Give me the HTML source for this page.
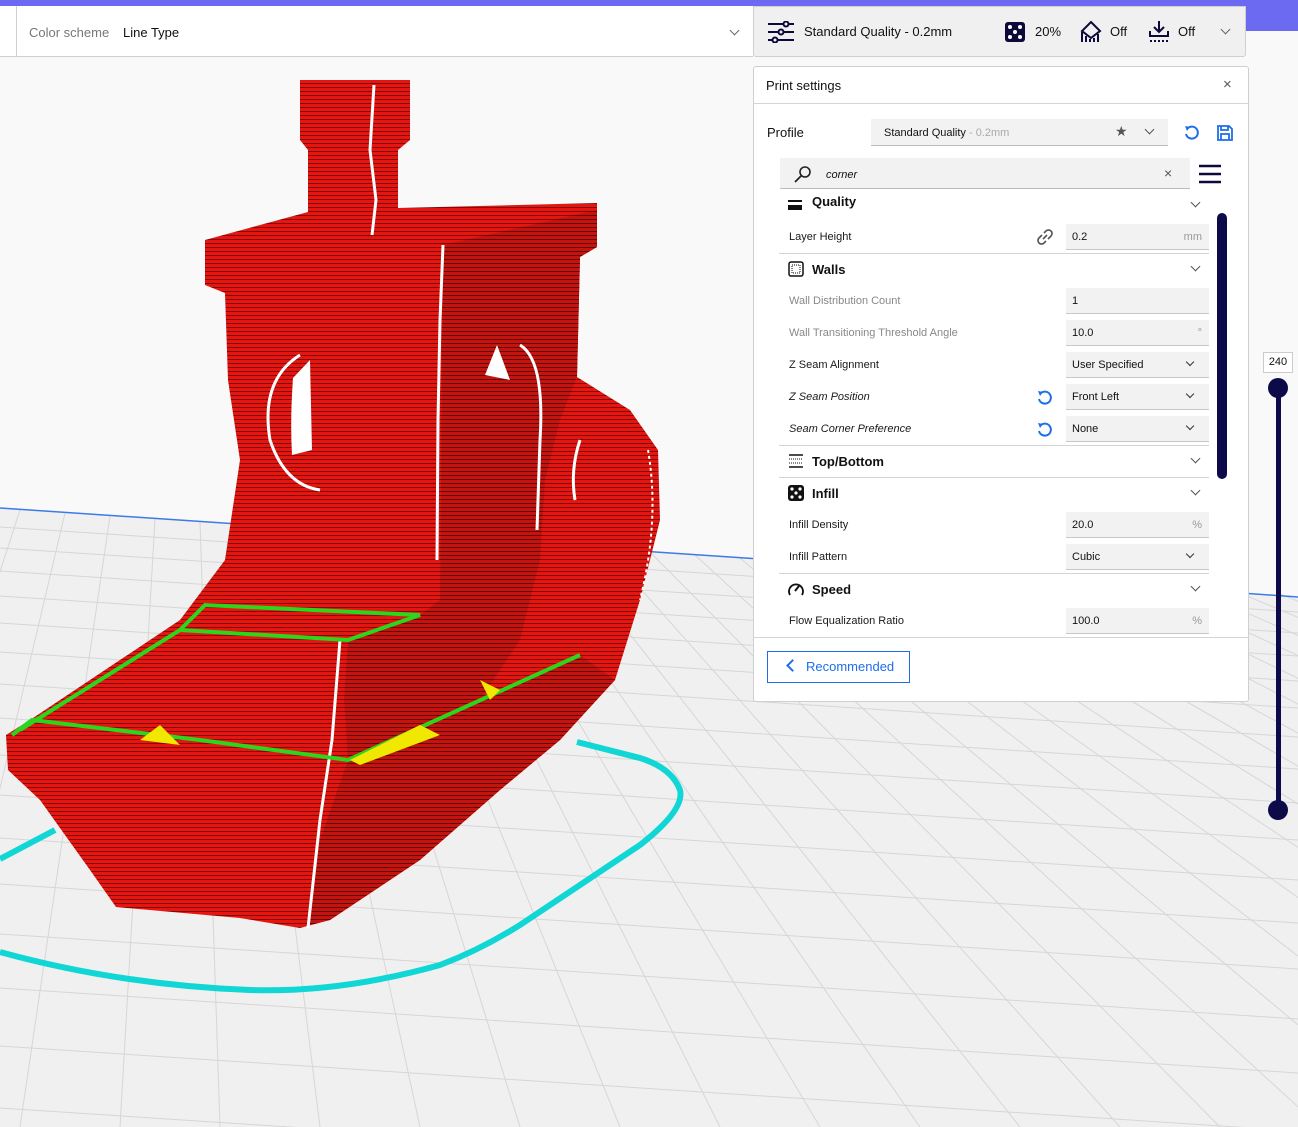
<!DOCTYPE html>
<html style="overflow:hidden"><head><meta charset="utf-8"><style>
*{margin:0;padding:0;box-sizing:border-box}
html,body{width:1298px;height:1127px;overflow:hidden}
body{background:#f9f9f9;font-family:"Liberation Sans",sans-serif;position:relative;color:#1a1a1a}
.abs{position:absolute}
.row{position:absolute;left:789px;font-size:11px;color:#1a1a1a}
.val{position:absolute;left:1066px;width:143px;height:26px;background:#f2f2f2;border-bottom:1px solid #c8c8c8;font-size:11px;padding:7px 6px;color:#111}
.unit{position:absolute;right:7px;top:7px;color:#999}
.chev{position:absolute;right:16px;top:7px;width:6px;height:6px;border-right:1px solid #333;border-bottom:1px solid #333;transform:rotate(45deg)}
.hdr{position:absolute;left:812px;font-size:13px;font-weight:bold;color:#111}
.sep{position:absolute;left:779px;width:430px;height:1px;background:#d4d4d4}
.hchev{position:absolute;left:1192px;width:7px;height:7px;border-right:1px solid #555;border-bottom:1px solid #555;transform:rotate(45deg)}
</style></head><body>
<svg class="abs" style="left:0;top:0" width="1298" height="1127" viewBox="0 0 1298 1127">
<defs>
<pattern id="stripe" width="6" height="4" patternUnits="userSpaceOnUse"><rect width="6" height="4" fill="#e8140f"/><rect y="3" width="6" height="1" fill="#7a0d0a"/></pattern>
<pattern id="stripe2" width="6" height="4" patternUnits="userSpaceOnUse"><rect width="6" height="4" fill="#c8120e"/><rect y="3" width="6" height="1" fill="#5a0a08"/></pattern>
</defs>
<polygon points="0,508 760,559 1298,597 1298,1127 0,1127" fill="#f0f0f0"/>
<g stroke="#d6d6d6" stroke-width="1">
<line x1="0" y1="527" x2="1298" y2="612"/><line x1="0" y1="548" x2="1298" y2="633"/><line x1="0" y1="571" x2="1298" y2="656"/><line x1="0" y1="596" x2="1298" y2="681"/><line x1="0" y1="623" x2="1298" y2="708"/><line x1="0" y1="652" x2="1298" y2="737"/><line x1="0" y1="684" x2="1298" y2="769"/><line x1="0" y1="718" x2="1298" y2="803"/><line x1="0" y1="755" x2="1298" y2="840"/><line x1="0" y1="795" x2="1298" y2="880"/><line x1="0" y1="838" x2="1298" y2="923"/><line x1="0" y1="884" x2="1298" y2="969"/><line x1="0" y1="934" x2="1298" y2="1019"/><line x1="0" y1="988" x2="1298" y2="1073"/><line x1="0" y1="1046" x2="1298" y2="1131"/><line x1="0" y1="1108" x2="1298" y2="1193"/>
</g>
<g stroke="#d6d6d6" stroke-width="1">
<line x1="20" y1="510" x2="-180" y2="1127"/><line x1="65" y1="513" x2="-80" y2="1127"/><line x1="110" y1="516" x2="20" y2="1127"/><line x1="155" y1="519" x2="120" y2="1127"/><line x1="200" y1="522" x2="220" y2="1127"/><line x1="245" y1="525" x2="320" y2="1127"/><line x1="290" y1="528" x2="420" y2="1127"/><line x1="335" y1="531" x2="520" y2="1127"/><line x1="380" y1="534" x2="620" y2="1127"/><line x1="425" y1="537" x2="720" y2="1127"/><line x1="470" y1="540" x2="820" y2="1127"/><line x1="515" y1="543" x2="920" y2="1127"/><line x1="560" y1="546" x2="1020" y2="1127"/><line x1="605" y1="549" x2="1120" y2="1127"/><line x1="650" y1="552" x2="1220" y2="1127"/><line x1="695" y1="555" x2="1320" y2="1127"/><line x1="740" y1="558" x2="1420" y2="1127"/><line x1="785" y1="561" x2="1520" y2="1127"/><line x1="830" y1="564" x2="1620" y2="1127"/><line x1="875" y1="567" x2="1720" y2="1127"/><line x1="920" y1="570" x2="1820" y2="1127"/><line x1="965" y1="573" x2="1920" y2="1127"/><line x1="1010" y1="576" x2="2020" y2="1127"/><line x1="1055" y1="579" x2="2120" y2="1127"/><line x1="1100" y1="582" x2="2220" y2="1127"/><line x1="1145" y1="585" x2="2320" y2="1127"/><line x1="1190" y1="588" x2="2420" y2="1127"/><line x1="1235" y1="591" x2="2520" y2="1127"/><line x1="1280" y1="594" x2="2620" y2="1127"/>
</g>
<polyline points="0,508 760,559 1298,597" fill="none" stroke="#3a7be8" stroke-width="1.5"/>
<g fill="none" stroke="#11d6d6" stroke-width="6">
<path d="M0,952 Q120,985 250,990 Q340,993 440,965 Q480,950 520,925 L640,845 Q685,810 680,790 Q672,768 640,758 L577,742"/>
<path d="M0,859 L55,830"/>
</g>
<polygon fill="url(#stripe)" points="300,80 410,80 410,140 398,150 398,208 597,203 597,247 580,257 577,377 630,410 658,450 660,520 640,600 615,680 560,740 500,790 420,860 330,920 300,928 240,918 116,907 90,870 40,800 8,770 6,735 30,720 180,620 225,560 240,460 228,380 225,293 205,285 205,240 308,212 308,150 300,140"/>
<polygon fill="url(#stripe2)" points="443,245 597,210 597,247 580,257 577,377 560,420 545,480 540,560 520,640 480,700 440,730 348,760 340,640 420,615 440,600"/>
<polygon fill="url(#stripe2)" points="348,760 580,655 615,680 560,740 500,790 420,860 330,920 310,925 320,840"/>
<polygon fill="url(#stripe)" points="180,630 205,605 420,615 348,640 340,760 180,745"/>
<g stroke="#fff" stroke-width="3" fill="none">
<path d="M374,85 L370,150 L376,200 L372,235"/>
<path d="M443,245 L440,320 L438,420 L437,560"/>
<path d="M340,640 L332,740 L320,820 L308,928"/>
<path d="M300,355 Q260,380 270,440 Q285,485 320,490"/>
<path d="M520,345 Q545,360 540,440 L537,530"/>
<path d="M580,440 Q570,470 575,500"/>
<path d="M648,450 Q660,520 640,600" stroke-width="2" stroke-dasharray="3 3"/>
</g>
<g fill="#fff"><path d="M293,378 Q290,420 292,455 L312,450 L310,360 Z"/><path d="M485,375 L497,345 L510,380 Z"/></g>
<g fill="none" stroke="#2bd61c" stroke-width="4">
<path d="M180,630 L205,605 L420,615 L348,640 Z"/>
<path d="M12,735 L32,720 L200,740 L348,760 L580,655"/>
<path d="M20,730 L180,630"/>
</g>
<g fill="#f0e800"><path d="M480,680 L500,690 L490,700 Z"/><path d="M350,760 L420,725 L440,735 L360,765 Z"/><path d="M140,740 L160,725 L180,745 Z"/></g>
</svg>

<div class="abs" style="left:0;top:0;width:1298px;height:6px;background:#6c6af0"></div>
<div class="abs" style="left:1245px;top:0;width:53px;height:31px;background:#6c6af0"></div>
<div class="abs" style="left:0;top:6px;width:753px;height:51px;background:#fff;border-bottom:1px solid #cfcfcf"></div>
<div class="abs" style="left:16px;top:6px;width:1px;height:51px;background:#cfcfcf"></div>
<div class="abs" style="left:29px;top:25px;font-size:13px;color:#777">Color scheme</div>
<div class="abs" style="left:123px;top:25px;font-size:13px;color:#111">Line Type</div>
<div class="abs" style="left:731px;top:27px;width:7px;height:7px;border-right:1px solid #666;border-bottom:1px solid #666;transform:rotate(45deg)"></div>
<div class="abs" style="left:753px;top:6px;width:493px;height:51px;background:#f0f0f0;border:1px solid #cfcfcf;border-radius:0 0 3px 3px"></div>
<svg class="abs" style="left:768px;top:21px" width="28" height="22"><g stroke="#0d0a3a" stroke-width="2" fill="#f0f0f0"><line x1="0" y1="3" x2="26" y2="3"/><line x1="0" y1="11" x2="26" y2="11"/><line x1="0" y1="19" x2="26" y2="19"/><circle cx="18" cy="3" r="2.5"/><circle cx="13" cy="11" r="2.5"/><circle cx="7" cy="19" r="2.5"/></g></svg>
<div class="abs" style="left:804px;top:24px;font-size:13px;color:#111">Standard Quality - 0.2mm</div>
<svg class="abs" style="left:1005px;top:22px" width="20" height="20"><rect width="20" height="20" rx="3" fill="#0d0a3a"/><g fill="#fff"><circle cx="5" cy="5" r="2"/><circle cx="15" cy="5" r="2"/><circle cx="10" cy="10" r="2"/><circle cx="5" cy="15" r="2"/><circle cx="15" cy="15" r="2"/></g></svg>
<div class="abs" style="left:1035px;top:24px;font-size:13px;color:#111">20%</div>
<svg class="abs" style="left:1080px;top:20px" width="22" height="23"><g fill="none" stroke="#0d0a3a" stroke-width="2"><path d="M11,2 L20,11 L11,18 L2,11 Z"/><path d="M2,12 V22 M6,16 V22 M10,19 V22 M14,18 V22 M18,14 V22"/></g></svg>
<div class="abs" style="left:1110px;top:24px;font-size:13px;color:#111">Off</div>
<svg class="abs" style="left:1148px;top:20px" width="22" height="23"><g fill="none" stroke="#0d0a3a" stroke-width="2"><path d="M11,1 V12 M6,7 L11,12 L16,7 M2,11 V16 H20 V11"/><path d="M2,21 H20" stroke-dasharray="2 2"/></g></svg>
<div class="abs" style="left:1178px;top:24px;font-size:13px;color:#111">Off</div>
<div class="abs" style="left:1222px;top:26px;width:7px;height:7px;border-right:1px solid #666;border-bottom:1px solid #666;transform:rotate(45deg)"></div>

<div class="abs" style="left:753px;top:66px;width:496px;height:636px;background:#fff;border:1px solid #cfcfcf;border-radius:3px"></div>
<div class="abs" style="left:754px;top:103px;width:494px;height:1px;background:#d4d4d4"></div>
<div class="abs" style="left:766px;top:78px;font-size:13px;color:#111">Print settings</div>
<div class="abs" style="left:1223px;top:76px;font-size:15px;color:#555">×</div>
<div class="abs" style="left:767px;top:125px;font-size:13px;color:#111">Profile</div>
<div class="abs" style="left:871px;top:119px;width:297px;height:27px;background:#f2f2f2;border-bottom:1px solid #bbb"></div>
<div class="abs" style="left:884px;top:127px;font-size:11px;color:#111">Standard Quality <span style="color:#aaa">- 0.2mm</span></div>
<div class="abs" style="left:1115px;top:123px;font-size:14px;color:#555">★</div>
<div class="abs" style="left:1146px;top:126px;width:7px;height:7px;border-right:1px solid #555;border-bottom:1px solid #555;transform:rotate(45deg)"></div>
<svg class="abs" style="left:1183px;top:124px" width="18" height="18"><path d="M5,4 A6,6 0 1 1 3,10" fill="none" stroke="#1e6ee8" stroke-width="2"/><path d="M2,2 L7,3 L4,7 Z" fill="#1e6ee8"/></svg>
<svg class="abs" style="left:1216px;top:124px" width="18" height="18"><path d="M2,2 H13 L16,5 V16 H2 Z M5,2 V6 H12 V2 M5,16 V10 H13 V16" fill="none" stroke="#1e6ee8" stroke-width="1.8"/></svg>
<div class="abs" style="left:780px;top:158px;width:410px;height:31px;background:#f2f2f2;border-bottom:1px solid #bbb"></div>
<svg class="abs" style="left:794px;top:165px" width="18" height="18"><circle cx="11" cy="7" r="5" fill="none" stroke="#222" stroke-width="1.6"/><line x1="7" y1="11" x2="1" y2="17" stroke="#222" stroke-width="1.8"/></svg>
<div class="abs" style="left:826px;top:169px;font-size:11px;font-style:italic;color:#111">corner</div>
<div class="abs" style="left:1164px;top:165px;font-size:14px;color:#555">×</div>
<svg class="abs" style="left:1199px;top:164px" width="22" height="20"><g stroke="#0d0a3a" stroke-width="2.4"><line x1="0" y1="2" x2="22" y2="2"/><line x1="0" y1="10" x2="22" y2="10"/><line x1="0" y1="18" x2="22" y2="18"/></g></svg>

<div class="abs" style="left:754px;top:192px;width:460px;height:444px;overflow:hidden">
<div style="position:absolute;left:34px;top:8px;width:14px;height:2px;background:#111"></div>
<div style="position:absolute;left:34px;top:13px;width:14px;height:5px;background:#111"></div>
<div style="position:absolute;left:58px;top:2px;font-size:13px;font-weight:bold;color:#111">Quality</div>
</div>
<div class="hchev" style="top:199px"></div>
<div class="row" style="top:231px">Layer Height</div>
<svg class="abs" style="left:1036px;top:228px" width="18" height="18"><g fill="none" stroke="#555" stroke-width="1.6"><path d="M8,5 L10,3 A3,3 0 0 1 15,8 L12,11"/><path d="M10,13 L8,15 A3,3 0 0 1 3,10 L6,7"/><line x1="7" y1="11" x2="11" y2="7"/></g></svg>
<div class="val" style="top:224px">0.2<span class="unit">mm</span></div>
<div class="sep" style="top:253px"></div>
<svg class="abs" style="left:788px;top:261px" width="16" height="16"><rect x="1" y="1" width="14" height="14" rx="2" fill="none" stroke="#111" stroke-width="1.5"/><rect x="4" y="4" width="8" height="8" fill="none" stroke="#111" stroke-width="1" stroke-dasharray="1 1"/></svg>
<div class="hdr" style="top:262px">Walls</div><div class="hchev" style="top:263px"></div>
<div class="row" style="top:295px;color:#888">Wall Distribution Count</div><div class="val" style="top:288px">1</div>
<div class="row" style="top:327px;color:#888">Wall Transitioning Threshold Angle</div><div class="val" style="top:320px">10.0<span class="unit">°</span></div>
<div class="row" style="top:359px">Z Seam Alignment</div><div class="val" style="top:352px">User Specified<span class="chev"></span></div>
<div class="row" style="top:391px;font-style:italic">Z Seam Position</div><div class="val" style="top:384px">Front Left<span class="chev"></span></div>
<div class="row" style="top:423px;font-style:italic">Seam Corner Preference</div><div class="val" style="top:416px">None<span class="chev"></span></div>
<svg class="abs" style="left:1036px;top:389px" width="18" height="18"><path d="M5,4 A6,6 0 1 1 3,10" fill="none" stroke="#1e6ee8" stroke-width="2"/><path d="M2,2 L7,3 L4,7 Z" fill="#1e6ee8"/></svg>
<svg class="abs" style="left:1036px;top:421px" width="18" height="18"><path d="M5,4 A6,6 0 1 1 3,10" fill="none" stroke="#1e6ee8" stroke-width="2"/><path d="M2,2 L7,3 L4,7 Z" fill="#1e6ee8"/></svg>
<div class="sep" style="top:445px"></div>
<svg class="abs" style="left:788px;top:453px" width="16" height="16"><g stroke="#111"><line x1="1" y1="2" x2="15" y2="2" stroke-width="1.5"/><line x1="1" y1="14" x2="15" y2="14" stroke-width="1.5"/><line x1="1" y1="6" x2="15" y2="6" stroke-dasharray="1 1"/><line x1="1" y1="10" x2="15" y2="10" stroke-dasharray="1 1"/></g></svg>
<div class="hdr" style="top:454px">Top/Bottom</div><div class="hchev" style="top:455px"></div>
<div class="sep" style="top:477px"></div>
<svg class="abs" style="left:788px;top:485px" width="16" height="16"><rect width="16" height="16" rx="3" fill="#111"/><g fill="#fff"><circle cx="4" cy="4" r="1.6"/><circle cx="12" cy="4" r="1.6"/><circle cx="8" cy="8" r="1.6"/><circle cx="4" cy="12" r="1.6"/><circle cx="12" cy="12" r="1.6"/></g></svg>
<div class="hdr" style="top:486px">Infill</div><div class="hchev" style="top:487px"></div>
<div class="row" style="top:519px">Infill Density</div><div class="val" style="top:512px">20.0<span class="unit">%</span></div>
<div class="row" style="top:551px">Infill Pattern</div><div class="val" style="top:544px">Cubic<span class="chev"></span></div>
<div class="sep" style="top:573px"></div>
<svg class="abs" style="left:787px;top:581px" width="18" height="16"><path d="M3,14 A7,7 0 1 1 15,14" fill="none" stroke="#111" stroke-width="1.8"/><line x1="8" y1="10" x2="12" y2="5" stroke="#111" stroke-width="2"/></svg>
<div class="hdr" style="top:582px">Speed</div><div class="hchev" style="top:583px"></div>
<div class="row" style="top:615px">Flow Equalization Ratio</div><div class="val" style="top:608px">100.0<span class="unit">%</span></div>
<div class="abs" style="left:1217px;top:213px;width:10px;height:266px;background:#0d0a4a;border-radius:5px"></div>
<div class="abs" style="left:754px;top:637px;width:494px;height:1px;background:#d4d4d4"></div>
<div class="abs" style="left:767px;top:651px;width:143px;height:32px;border:1px solid #1e6ee8"></div>
<div class="abs" style="left:788px;top:661px;width:9px;height:9px;border-left:2px solid #1e6ee8;border-bottom:2px solid #1e6ee8;transform:rotate(45deg)"></div>
<div class="abs" style="left:806px;top:659px;font-size:13px;color:#1e6ee8">Recommended</div>

<div class="abs" style="left:1276px;top:388px;width:5px;height:422px;background:#0d0a4a"></div>
<div class="abs" style="left:1268px;top:378px;width:20px;height:20px;border-radius:50%;background:#0d0a4a"></div>
<div class="abs" style="left:1268px;top:800px;width:20px;height:20px;border-radius:50%;background:#0d0a4a"></div>
<div class="abs" style="left:1263px;top:352px;width:30px;height:21px;background:#fff;border:1px solid #ccc;font-size:11px;text-align:center;line-height:19px;color:#111">240</div>
</body></html>
